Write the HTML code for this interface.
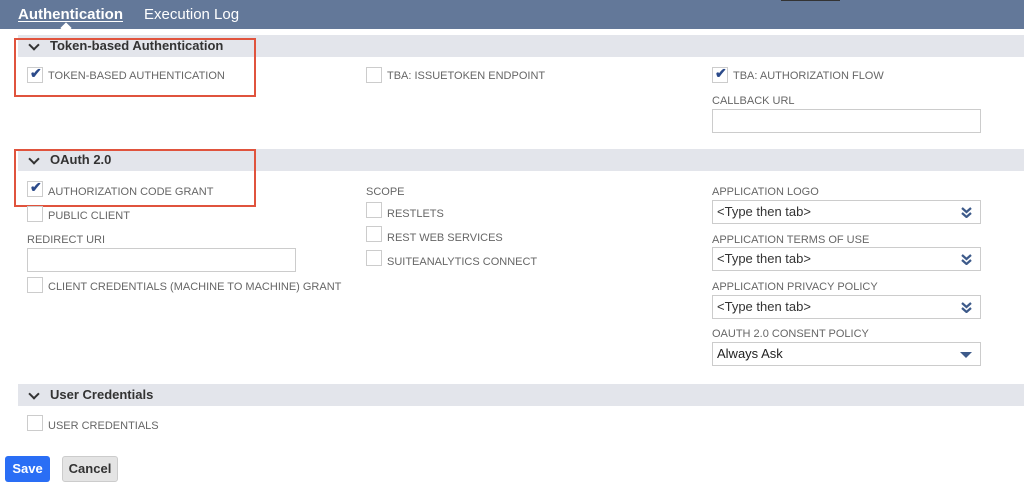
<!DOCTYPE html>
<html><head><style>
body{margin:0;width:1024px;height:493px;background:#fff;font-family:"Liberation Sans",sans-serif;position:relative;overflow:hidden}
.a{position:absolute}
.tabs{left:0;top:0;width:1024px;height:29px;background:#637899}
.tab{top:6px;color:#fff;font-size:15px}
.sh{left:18px;width:1006px;height:22px;background:#e3e5eb}
.sh span{position:absolute;left:32px;top:3px;font-size:13px;font-weight:bold;color:#333}
.sh i{position:absolute;left:12px;top:6px;width:6px;height:6px;border-right:2px solid #333;border-bottom:2px solid #333;transform:rotate(45deg)}
.cb{width:14px;height:14px;border:1px solid #ccc;background:#fff}
.lb{font-size:11px;color:#666}
.in{border:1px solid #ccc;background:#fff;height:22px;box-sizing:border-box}
.red{border:2px solid #e0533d;box-sizing:border-box}
.ph{font-size:13px;color:#333;padding:3px 4px}
.ck{position:absolute;left:2px;top:-3px;color:#2b4a8a;font-size:14px;font-weight:bold}
.dc{position:absolute;right:8px;top:6px}
</style></head><body>
<div class="a tabs"></div>
<div class="a" style="left:781px;top:0;width:59px;height:1px;background:#333"></div>
<div class="a tab" style="left:18px;font-weight:bold;text-decoration:underline 1px;text-decoration-skip-ink:none;text-underline-offset:2px">Authentication</div>
<div class="a tab" style="left:144px">Execution Log</div>
<div class="a" style="left:62px;top:24px;width:8px;height:8px;background:#fff;transform:rotate(45deg)"></div>

<div class="a sh" style="top:35px"><i></i><span>Token-based Authentication</span></div>
<div class="a sh" style="top:149px"><i></i><span>OAuth 2.0</span></div>
<div class="a sh" style="top:384px"><i></i><span>User Credentials</span></div>

<div class="a red" style="left:14px;top:38px;width:242px;height:59px"></div>
<div class="a red" style="left:14px;top:149px;width:242px;height:58px"></div>

<div class="a cb" style="left:27px;top:67px"><span class="ck">✔</span></div><div class="a lb" style="left:48px;top:70px">TOKEN-BASED AUTHENTICATION</div>
<div class="a cb" style="left:366px;top:67px"></div><div class="a lb" style="left:387px;top:70px">TBA: ISSUETOKEN ENDPOINT</div>
<div class="a cb" style="left:712px;top:67px"><span class="ck">✔</span></div><div class="a lb" style="left:733px;top:70px">TBA: AUTHORIZATION FLOW</div>
<div class="a lb" style="left:712px;top:95px">CALLBACK URL</div>
<div class="a in" style="left:712px;top:109px;width:269px;height:24px"></div>

<div class="a cb" style="left:27px;top:181px"><span class="ck">✔</span></div><div class="a lb" style="left:48px;top:186px">AUTHORIZATION CODE GRANT</div>
<div class="a cb" style="left:27px;top:206px"></div><div class="a lb" style="left:48px;top:210px">PUBLIC CLIENT</div>
<div class="a lb" style="left:27px;top:234px">REDIRECT URI</div>
<div class="a in" style="left:27px;top:248px;width:269px;height:24px"></div>
<div class="a cb" style="left:27px;top:277px"></div><div class="a lb" style="left:48px;top:281px">CLIENT CREDENTIALS (MACHINE TO MACHINE) GRANT</div>

<div class="a lb" style="left:366px;top:186px">SCOPE</div>
<div class="a cb" style="left:366px;top:202px"></div><div class="a lb" style="left:387px;top:208px">RESTLETS</div>
<div class="a cb" style="left:366px;top:226px"></div><div class="a lb" style="left:387px;top:232px">REST WEB SERVICES</div>
<div class="a cb" style="left:366px;top:250px"></div><div class="a lb" style="left:387px;top:256px">SUITEANALYTICS CONNECT</div>

<div class="a lb" style="left:712px;top:186px">APPLICATION LOGO</div>
<div class="a in ph" style="left:712px;top:200px;width:269px;height:24px">&lt;Type then tab&gt;<svg class="dc" width="11" height="11" viewBox="0 0 11 11"><path d="M1 1l4.5 4 4.5-4M1 6l4.5 4 4.5-4" fill="none" stroke="#3d5a8a" stroke-width="2.2"/></svg></div>
<div class="a lb" style="left:712px;top:234px">APPLICATION TERMS OF USE</div>
<div class="a in ph" style="left:712px;top:247px;width:269px;height:24px">&lt;Type then tab&gt;<svg class="dc" width="11" height="11" viewBox="0 0 11 11"><path d="M1 1l4.5 4 4.5-4M1 6l4.5 4 4.5-4" fill="none" stroke="#3d5a8a" stroke-width="2.2"/></svg></div>
<div class="a lb" style="left:712px;top:281px">APPLICATION PRIVACY POLICY</div>
<div class="a in ph" style="left:712px;top:295px;width:269px;height:24px">&lt;Type then tab&gt;<svg class="dc" width="11" height="11" viewBox="0 0 11 11"><path d="M1 1l4.5 4 4.5-4M1 6l4.5 4 4.5-4" fill="none" stroke="#3d5a8a" stroke-width="2.2"/></svg></div>
<div class="a lb" style="left:712px;top:328px">OAUTH 2.0 CONSENT POLICY</div>
<div class="a in ph" style="left:712px;top:342px;width:269px;height:24px;color:#222">Always Ask<span style="position:absolute;right:8px;top:9px;width:0;height:0;border-left:6px solid transparent;border-right:6px solid transparent;border-top:6px solid #3d5a8a"></span></div>

<div class="a cb" style="left:27px;top:415px"></div><div class="a lb" style="left:48px;top:420px">USER CREDENTIALS</div>

<div class="a" style="left:5px;top:456px;width:45px;height:26px;background:#2a6ef5;border-radius:3px;color:#fff;font-size:13px;font-weight:bold;text-align:center;line-height:26px">Save</div>
<div class="a" style="left:62px;top:456px;width:56px;height:26px;background:#e4e4e4;border:1px solid #ccc;box-sizing:border-box;border-radius:3px;color:#333;font-size:13px;font-weight:bold;text-align:center;line-height:24px">Cancel</div>
</body></html>
